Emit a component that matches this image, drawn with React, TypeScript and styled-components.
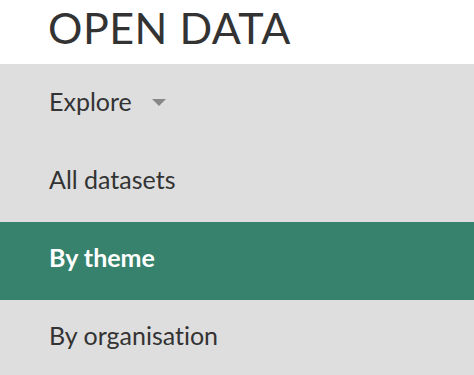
import React from "react";
import styled, { createGlobalStyle } from "styled-components";

const Global = createGlobalStyle`
  html, body { margin: 0; padding: 0; background: #ffffff; }
  body { font-family: Lato, "Open Sans", sans-serif; overflow: hidden; font-variant-ligatures: none; }
`;

const Page = styled.div`
  width: 474px;
  height: 375px;
  display: flex;
  flex-direction: column;
  overflow: hidden;
`;

const Header = styled.header`
  height: 64px;
  flex-shrink: 0;
  display: flex;
  align-items: center;
  padding-left: 48px;
  background: #ffffff;
`;

const Title = styled.h1`
  margin: -10px 0 0 0;
  font-family: Lato, sans-serif;
  font-weight: 400;
  font-size: 43px;
  letter-spacing: 0.5px;
  color: #333333;
  line-height: 1;
`;

const Menu = styled.nav`
  flex: 1;
  background: #dedede;
  display: flex;
  flex-direction: column;
  padding-top: 2px;
`;

const Item = styled.div<{ $active?: boolean }>`
  height: 78px;
  flex-shrink: 0;
  display: flex;
  align-items: center;
  gap: 20px;
  padding-left: 49px;
  padding-bottom: 9px;
  box-sizing: border-box;
  font-size: 25px;
  font-variant-ligatures: none;
  font-weight: ${(p) => (p.$active ? 700 : 400)};
  color: ${(p) => (p.$active ? "#ffffff" : "#333333")};
  background: ${(p) => (p.$active ? "#36826c" : "transparent")};
`;

const Caret = styled.span`
  width: 0;
  height: 0;
  border-left: 7px solid transparent;
  border-right: 7px solid transparent;
  border-top: 7px solid #888888;
  margin-top: 3px;
`;

export default function App() {
  return (
    <Page>
      <Global />
      <Header>
        <Title>OPEN DATA</Title>
      </Header>
      <Menu>
        <Item>
          Explore
          <Caret />
        </Item>
        <Item>All datasets</Item>
        <Item $active>By theme</Item>
        <Item>By organisation</Item>
      </Menu>
    </Page>
  );
}
